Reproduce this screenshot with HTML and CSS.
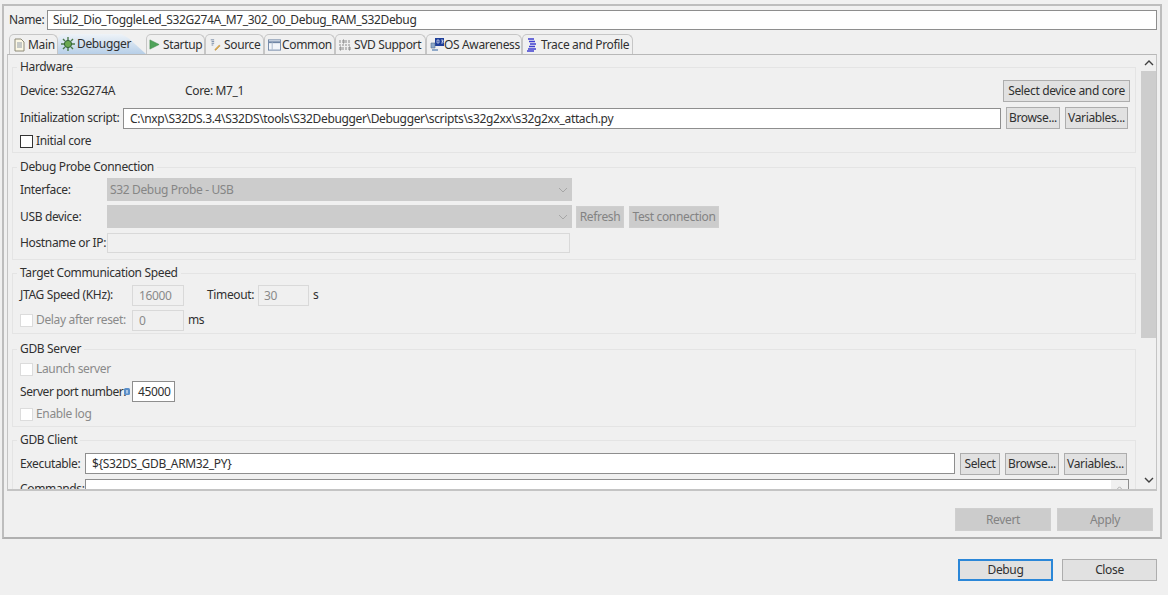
FILE: index.html
```html
<!DOCTYPE html>
<html lang="en">
<head>
<meta charset="utf-8">
<title>Debug Configurations</title>
<link rel="stylesheet" href="styles.css">
</head>
<body>
<div class="dialog">
  <main class="panel">
    <div class="name-row">
      <label class="name-label">Name:</label>
      <div class="input name-input">Siul2_Dio_ToggleLed_S32G274A_M7_302_00_Debug_RAM_S32Debug</div>
    </div>
    <nav class="tabs">
      <div class="tab w-main"><svg class="ico" viewBox="0 0 12 14"><path d="M2 1h6l3 3v9H2z" fill="#fbf7e4" stroke="#8d8a78"/><path d="M4 5h5M4 7h5M4 9h5" stroke="#8f9aa8"/></svg>Main</div>
      <div class="tab tab-active w-debug"><svg class="ico ico-wide" viewBox="0 0 14 14"><circle cx="7" cy="7" r="3.6" fill="#6aa84f" stroke="#2f5f35"/><path d="M7 0v3M7 11v3M0 7h3M11 7h3M2 2l2 2M10 10l2 2M12 2l-2 2M4 10l-2 2" stroke="#4c7a4a" stroke-width="1.4"/></svg>Debugger</div>
      <div class="tab w-start"><svg class="ico ico-start" viewBox="0 0 12 12"><path d="M1 1l10 5-10 5z" fill="#4fa35a" stroke="#3b8748" stroke-width=".6"/></svg>Startup</div>
      <div class="tab w-source"><svg class="ico" viewBox="0 0 14 14"><path d="M2 1h4M3 3h3M3 5h3M3 7h2" stroke="#6a7f9e"/><path d="M7 12l5-5 1 1-5 5H7z" fill="#e3b04b" stroke="#b5863a" stroke-width=".6"/></svg>Source</div>
      <div class="tab w-common"><svg class="ico ico-common" viewBox="0 0 14 12"><rect x=".5" y=".5" width="13" height="11" fill="#f2f5fa" stroke="#6f86a6"/><path d="M1 3h12" stroke="#6f86a6" stroke-width="2"/><path d="M4.500 3v8" stroke="#a8b6c9"/></svg>Common</div>
      <div class="tab w-svd"><svg class="ico ico-svd" viewBox="0 0 12 12"><path d="M1 1v3M4 1h1v3H4zM7 1v3M10 1v3M1 8h1v3H1zM4 8v3M7 8v3M10 8h1v3h-1zM1 5v2M4 5v2M7 5v2M10 5v2" stroke="#8a8a8a" fill="none"/></svg>SVD Support</div>
      <div class="tab w-os"><svg class="ico ico-os" viewBox="0 0 14 14"><rect x="5" y="0" width="9" height="8" fill="#1f3f9a"/><path d="M1 5h4v5H1z" fill="#8fa9c9" stroke="#54708f" stroke-width=".6"/><path d="M2 11h6v2H2z" fill="#8fa9c9"/><path d="M7 2h2v3H7zM11 2h2v1h-1v.500h1V5h-2" fill="none" stroke="#fff" stroke-width=".6"/></svg>OS Awareness</div>
      <div class="tab w-trace"><svg class="ico" viewBox="0 0 12 14"><path d="M2 1h6M3 3.500h6M4 6h6M3 8.500h6M2 11h8M1 13h7" stroke="#3f3fd0" stroke-width="1.500"/></svg>Trace and Profile</div>
    </nav>
    <section class="tab-body">
      <div class="scroller">
        <div class="form">
          <fieldset class="group group-hw">
            <legend>Hardware</legend>
            <div class="row row-device">
              <span class="device">Device: S32G274A</span>
              <span>Core: M7_1</span>
              <button class="btn btn-select push">Select device and core</button>
            </div>
            <div class="row row-init">
              <label>Initialization script:</label>
              <div class="input init-input">C:\nxp\S32DS.3.4\S32DS\tools\S32Debugger\Debugger\scripts\s32g2xx\s32g2xx_attach.py</div>
              <button class="btn btn-browse">Browse...</button>
              <button class="btn btn-vars">Variables...</button>
            </div>
            <label class="check-row check-first"><span class="check"></span>Initial core</label>
          </fieldset>

          <fieldset class="group group-probe">
            <legend>Debug Probe Connection</legend>
            <div class="row row-probe">
              <label class="probe-label">Interface:</label>
              <div class="combo">S32 Debug Probe - USB<svg class="chev" viewBox="0 0 10 6"><path d="M1 1l4 4 4-4" fill="none" stroke="#a6a6a6"/></svg></div>
            </div>
            <div class="row row-probe">
              <label class="probe-label">USB device:</label>
              <div class="combo"><svg class="chev" viewBox="0 0 10 6"><path d="M1 1l4 4 4-4" fill="none" stroke="#a6a6a6"/></svg></div>
              <button class="btn btn-off btn-refresh">Refresh</button>
              <button class="btn btn-off btn-test">Test connection</button>
            </div>
            <div class="row row-host">
              <label class="probe-label">Hostname or IP:</label>
              <div class="input input-off host-input"></div>
            </div>
          </fieldset>

          <fieldset class="group group-speed">
            <legend>Target Communication Speed</legend>
            <div class="row row-speed">
              <label class="jtag-label">JTAG Speed (KHz):</label>
              <div class="input input-off num">16000</div>
              <label class="timeout-label">Timeout:</label>
              <div class="input input-off num-t">30</div>
              <span class="unit">s</span>
            </div>
            <div class="row row-delay">
              <label class="delay-label muted"><span class="check check-off"></span>Delay after reset:</label>
              <div class="input input-off num">0</div>
              <span class="unit">ms</span>
            </div>
          </fieldset>

          <fieldset class="group group-gdb">
            <legend>GDB Server</legend>
            <label class="check-row muted"><span class="check check-off"></span>Launch server</label>
            <div class="row row-port">
              <label class="port-label">Server port number:</label>
              <svg class="info" viewBox="0 0 6 7"><rect width="6" height="7" rx="1.500" fill="#5b8fc9"/><path d="M3 2v3.500" stroke="#fff"/></svg>
              <div class="input port-input">45000</div>
            </div>
            <label class="check-row check-first muted"><span class="check check-off"></span>Enable log</label>
          </fieldset>

          <fieldset class="group group-client">
            <legend>GDB Client</legend>
            <div class="row row-exec">
              <label class="exec-label">Executable:</label>
              <div class="input exec-input">${S32DS_GDB_ARM32_PY}</div>
              <button class="btn btn-sel">Select</button>
              <button class="btn btn-browse">Browse...</button>
              <button class="btn btn-vars">Variables...</button>
            </div>
            <div class="row row-cmd">
              <label class="cmd-label">Commands:</label>
              <div class="textarea"><span class="ta-bar"><svg class="ta-up" viewBox="0 0 10 6"><path d="M1 5l4-4 4 4" fill="none" stroke="#a0a0a0"/></svg></span></div>
            </div>
          </fieldset>
        </div>
        <aside class="scrollbar">
          <svg class="arrow" viewBox="0 0 10 6"><path d="M1 5l4-4 4 4" fill="none" stroke="#404040" stroke-width="1.400"/></svg>
          <div class="thumb"></div>
          <svg class="arrow arrow-down" viewBox="0 0 10 6"><path d="M1 1l4 4 4-4" fill="none" stroke="#404040" stroke-width="1.400"/></svg>
        </aside>
      </div>
    </section>
    <div class="apply-row">
      <button class="btn btn-off btn-big">Revert</button>
      <button class="btn btn-off btn-big">Apply</button>
    </div>
  </main>
  <footer class="footer">
    <button class="btn btn-foot btn-default">Debug</button>
    <button class="btn btn-foot">Close</button>
  </footer>
</div>
</body>
</html>
```
FILE: styles.css
```css
* { box-sizing: border-box; }
html, body { margin: 0; height: 100%; }
body {
  background: #f0f0f0;
  color: #303030;
  font: 12px/16px "Noto Sans", "Open Sans", sans-serif;
  letter-spacing: -0.35px;
  overflow: hidden;
}
label, span, button { white-space: nowrap; }
.dialog { width: 1168px; height: 595px; padding: 4px 6px 0 2px; }
.panel {
  height: 535px;
  border: 2px solid #bdbdbd;
  border-bottom-color: #b0b0b0;
  padding: 4px 3px 0 3px;
}
.name-row { display: flex; align-items: center; height: 20px; }
.name-label { width: 40px; padding-left: 2px; flex: none; }
.input {
  background: #fff;
  border: 1px solid #8e8e8e;
  height: 21px;
  line-height: 19px;
  padding-left: 5px;
  white-space: nowrap;
  overflow: hidden;
}
.name-input { width: 1110px; height: 20px; line-height: 18px; }

.tabs { display: flex; height: 20px; margin: 4px 0 0 2px; }
.tab {
  flex: none;
  display: flex;
  align-items: center;
  padding-left: 3px;
  height: 20px;
  white-space: nowrap;
  border: 1px solid #c6c6c6;
  border-bottom: 0;
  border-radius: 5px 6px 0 0;
  background: #f0f0f0;
}
.tab-active {
  background: linear-gradient(#eef3f8, #b7cfe8);
  border: 0;
  clip-path: polygon(0 0, 72% 0, 80% 20%, 100% 100%, 0 100%);
  border-radius: 5px 0 0 0;
}
.w-main { width: 49px; }
.w-debug { width: 88px; }
.w-start { width: 59px; padding-left: 2px; }
.w-source { width: 59px; }
.w-common { width: 71px; }
.w-svd { width: 91px; }
.w-os { width: 96px; }
.w-trace { width: 111px; }
.ico { width: 12px; height: 14px; flex: none; margin-right: 3px; }
.ico-wide { width: 14px; margin-right: 2px; }
.ico-start { width: 11px; height: 11px; margin-right: 3px; }
.ico-common { width: 13px; height: 12px; margin-right: 1px; }
.ico-svd { width: 12px; height: 12px; }
.ico-os { width: 14px; height: 14px; margin-right: 0; }

.tab-body {
  height: 437px;
  width: 1150px;
  border: 2px solid #c4c4c4;
  border-width: 1px 1px 2px 1px;
  border-top-color: #b8b8b8;
}
.scroller { display: flex; height: 434px; overflow: hidden; }
.form { width: 1133px; flex: none; padding: 5px 0 0 4px; overflow: hidden; }
.scrollbar {
  flex: none;
  width: 15px;
  display: flex;
  flex-direction: column;
  align-items: center;
}
.arrow { width: 10px; height: 6px; margin: 5px 0 5px; flex: none; }
.arrow-down { margin: auto 0 6px; }
.thumb { width: 15px; height: 267px; background: #cdcdcd; flex: none; }

.group {
  margin: 0;
  width: 1124px;
  border: 1px solid #e4e4e4;
  padding: 0 5px 0 7px;
  min-width: 0;
}
.group legend { padding: 0 3px; margin-left: -3px; line-height: 14px; font-size: 12px; }
.group-hw { height: 93px; }
.group-probe { height: 100px; margin-top: 7px; }
.group-speed { height: 68px; margin-top: 6px; }
.group-gdb { height: 85px; margin-top: 8px; }
.group-client { height: 90px; margin-top: 6px; }

.row { display: flex; align-items: center; }
.row-device { height: 22px; margin-top: 6px; }
.device { width: 165px; }
.push { margin-left: auto; }
.row-init { height: 22px; margin-top: 5px; }
.row-init label { width: 103px; flex: none; }
.init-input { width: 878px; padding-left: 6px; }

.btn {
  font: inherit;
  letter-spacing: inherit;
  color: inherit;
  height: 22px;
  padding: 0;
  background: #e1e1e1;
  border: 1px solid #adadad;
  flex: none;
}
.btn-select { width: 127px; }
.btn-browse { width: 54px; margin-left: 5px; }
.btn-vars { width: 63px; margin-left: 5px; }
.btn-off { background: #cccccc; border-color: #cfcfcf; color: #838383; }
.btn-refresh { width: 48px; margin-left: 4px; }
.btn-test { width: 90px; margin-left: 5px; }
.btn-sel { width: 40px; margin-left: 5px; }
.btn-big { width: 96px; height: 23px; }
.btn-foot { width: 95px; height: 22px; }
.btn-default { border: 2px solid #2b87d8; }

.check-row { display: flex; align-items: center; height: 16px; margin-top: 5px; }
.check-first { margin-top: 4px; }
.check {
  width: 13px;
  height: 13px;
  background: #fff;
  border: 1px solid #333;
  margin-right: 3px;
  flex: none;
}
.check-off { border-color: #dcdcdc; }
.muted { color: #8a8a8a; }

.row-probe { height: 23px; margin-top: 4px; }
.probe-label { width: 87px; flex: none; }
.combo {
  width: 465px;
  height: 23px;
  line-height: 23px;
  background: #cccccc;
  color: #868686;
  padding-left: 3px;
  display: flex;
  align-items: center;
  flex: none;
}
.chev { width: 10px; height: 6px; margin-left: auto; margin-right: 4px; }
.input-off { background: #f0f0f0; border-color: #d9d9d9; color: #8a8a8a; }
.host-input { width: 463px; height: 20px; }
.row-host { height: 20px; margin-top: 5px; }

.row-speed { height: 22px; margin-top: 4px; }
.jtag-label { width: 112px; flex: none; }
.num { width: 52px; height: 21px; padding-left: 6px; flex: none; }
.timeout-label { margin-left: 23px; width: 51px; flex: none; }
.num-t { width: 51px; padding-left: 5px; flex: none; }
.unit { margin-left: 4px; color: #303030; }
.row-delay { height: 22px; margin-top: 3px; }
.delay-label { display: flex; align-items: center; width: 112px; flex: none; }

.row-port { height: 21px; margin-top: 4px; }
.port-label { flex: none; width: 104px; letter-spacing: -0.45px; }
.info { width: 6px; height: 7px; flex: none; margin-right: 2px; }
.port-input { width: 43px; padding-left: 5px; }

.row-exec { height: 21px; margin-top: 6px; }
.exec-label { width: 65px; flex: none; }
.exec-input { width: 870px; padding-left: 6px; }
.row-cmd { align-items: flex-start; margin-top: 5px; }
.cmd-label { width: 65px; flex: none; padding-top: 2px; }
.textarea {
  width: 1044px;
  height: 40px;
  background: #fff;
  border: 1px solid #8e8e8e;
  display: flex;
  justify-content: flex-end;
}
.ta-bar { width: 17px; background: #f0f0f0; display: flex; justify-content: center; }
.ta-up { width: 9px; height: 5px; margin-top: 6px; }

.apply-row { display: flex; justify-content: flex-end; gap: 6px; margin-top: 17px; padding-right: 4px; }
.footer { display: flex; justify-content: flex-end; gap: 9px; padding: 20px 5px 0 0; }
```
